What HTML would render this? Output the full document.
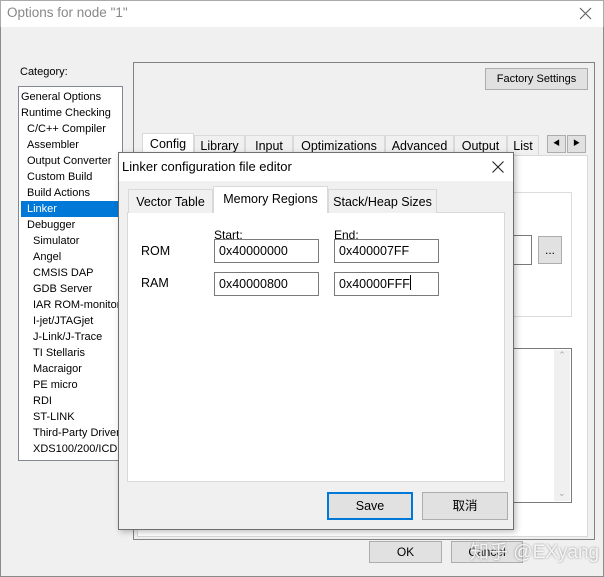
<!DOCTYPE html>
<html><head><meta charset="utf-8"><style>
*{margin:0;padding:0;box-sizing:border-box}
body{width:604px;height:577px;overflow:hidden;background:#f0f0f0;font-family:"Liberation Sans","Noto Sans CJK SC",sans-serif;font-size:12px;color:#000;position:relative}
.a{position:absolute}
.btn{position:absolute;background:#e1e1e1;border:1px solid #adadad;text-align:center}
.li{position:absolute;left:2px;width:98px;height:16px;line-height:16px;font-size:11px;white-space:nowrap;overflow:hidden}
.tab{position:absolute;height:20px;border:1px solid #d9d9d9;border-bottom:none;background:#f0f0f0;text-align:center;font-size:12.5px;line-height:20px}
.in{position:absolute;background:#fff;border:1px solid #7a7a7a;height:24px;line-height:22px;padding-left:4px;font-size:12.5px}
</style></head><body>
<div class="a" style="left:0;top:0;width:604px;height:577px;border:1px solid #8a8a8a;border-top:none"></div>
<div class="a" style="left:0;top:0;width:604px;height:27px;background:#fff;border:1px solid #aaa;border-bottom:none"></div>
<div class="a" style="left:7px;top:5px;font-size:13.5px;color:#888">Options for node "1"</div>
<svg class="a" style="left:579px;top:7px" width="13" height="13"><path d="M1 1L12 12M12 1L1 12" stroke="#666" stroke-width="1.2"/></svg>

<div class="a" style="left:20px;top:66px;font-size:11px">Category:</div>
<div class="a" style="left:18px;top:86px;width:105px;height:375px;background:#fff;border:1px solid #828790">
<div class="li" style="top:2px">General Options</div>
<div class="li" style="top:18px">Runtime Checking</div>
<div class="li" style="top:34px;padding-left:6px">C/C++ Compiler</div>
<div class="li" style="top:50px;padding-left:6px">Assembler</div>
<div class="li" style="top:66px;padding-left:6px">Output Converter</div>
<div class="li" style="top:82px;padding-left:6px">Custom Build</div>
<div class="li" style="top:98px;padding-left:6px">Build Actions</div>
<div class="li" style="top:114px;padding-left:6px;background:#0078d7;color:#fff">Linker</div>
<div class="li" style="top:130px;padding-left:6px">Debugger</div>
<div class="li" style="top:146px;padding-left:12px">Simulator</div>
<div class="li" style="top:162px;padding-left:12px">Angel</div>
<div class="li" style="top:178px;padding-left:12px">CMSIS DAP</div>
<div class="li" style="top:194px;padding-left:12px">GDB Server</div>
<div class="li" style="top:210px;padding-left:12px">IAR ROM-monitor</div>
<div class="li" style="top:226px;padding-left:12px">I-jet/JTAGjet</div>
<div class="li" style="top:242px;padding-left:12px">J-Link/J-Trace</div>
<div class="li" style="top:258px;padding-left:12px">TI Stellaris</div>
<div class="li" style="top:274px;padding-left:12px">Macraigor</div>
<div class="li" style="top:290px;padding-left:12px">PE micro</div>
<div class="li" style="top:306px;padding-left:12px">RDI</div>
<div class="li" style="top:322px;padding-left:12px">ST-LINK</div>
<div class="li" style="top:338px;padding-left:12px">Third-Party Driver</div>
<div class="li" style="top:354px;padding-left:12px">XDS100/200/ICDI</div>
</div>

<div class="a" style="left:133px;top:62px;width:462px;height:478px;border:1px solid #828282"></div>
<div class="btn" style="left:485px;top:68px;width:103px;height:22px;line-height:20px;font-size:11px">Factory Settings</div>
<div class="a" style="left:137px;top:155px;width:451px;height:382px;background:#fff;border:1px solid #d9d9d9"></div>
<div class="tab" style="left:142px;top:133px;width:52px;height:23px;background:#fff;line-height:21px">Config</div>
<div class="tab" style="left:194px;top:135px;width:51px">Library</div>
<div class="tab" style="left:245px;top:135px;width:48px">Input</div>
<div class="tab" style="left:293px;top:135px;width:92px">Optimizations</div>
<div class="tab" style="left:385px;top:135px;width:69px">Advanced</div>
<div class="tab" style="left:454px;top:135px;width:53px">Output</div>
<div class="tab" style="left:507px;top:135px;width:32px">List</div>
<div class="btn" style="left:547px;top:135px;width:19px;height:18px;font-size:7px;line-height:16px">◀</div>
<div class="btn" style="left:567px;top:135px;width:19px;height:18px;font-size:7px;line-height:16px">▶</div>
<div class="a" style="left:513px;top:192px;width:59px;height:125px;border:1px solid #dcdcdc"></div>
<div class="a" style="left:500px;top:235px;width:32px;height:30px;border:1px solid #7a7a7a;background:#fff"></div>
<div class="btn" style="left:538px;top:236px;width:24px;height:28px;line-height:26px">...</div>
<div class="a" style="left:500px;top:348px;width:72px;height:155px;border:1px solid #7a7a7a;background:#fff"></div>
<div class="a" style="left:554px;top:350px;width:16px;height:151px;background:#f0f0f0;color:#aaa;font-size:9px;text-align:center">⌃<br><span style="position:absolute;bottom:2px;left:4px">⌄</span></div>

<div class="btn" style="left:369px;top:541px;width:73px;height:22px;line-height:20px">OK</div>
<div class="btn" style="left:451px;top:541px;width:72px;height:22px;line-height:20px">Cancel</div>
<div class="a" style="left:470px;top:537px;font-size:19px;color:rgba(255,255,255,.85);text-shadow:0 0 2px #888">知乎 @EXyang</div>

<div class="a" style="left:118px;top:152px;width:396px;height:378px;background:#f0f0f0;border:1px solid #707070;box-shadow:2px 2px 6px rgba(0,0,0,.25)">
<div class="a" style="left:0;top:0;width:394px;height:28px;background:#fff"></div>
<div class="a" style="left:3px;top:6px;font-size:13px">Linker configuration file editor</div>
<svg class="a" style="left:373px;top:8px" width="12" height="12"><path d="M0.5 0.5L11.5 11.5M11.5 0.5L0.5 11.5" stroke="#222" stroke-width="1.1"/></svg>
<div class="a" style="left:8px;top:59px;width:378px;height:270px;background:#fff;border:1px solid #d9d9d9"></div>
<div class="tab" style="left:9px;top:36px;width:85px;height:24px;line-height:24px">Vector Table</div>
<div class="tab" style="left:94px;top:33px;width:115px;height:27px;background:#fff;line-height:25px">Memory Regions</div>
<div class="tab" style="left:209px;top:36px;width:109px;height:24px;line-height:24px">Stack/Heap Sizes</div>
<div class="a" style="left:22px;top:91px;font-size:12.5px">ROM</div>
<div class="a" style="left:22px;top:123px;font-size:12.5px">RAM</div>
<div class="a" style="left:95px;top:75px;font-size:12px">Start:</div>
<div class="a" style="left:215px;top:75px;font-size:12px">End:</div>
<div class="in" style="left:95px;top:86px;width:105px">0x40000000</div>
<div class="in" style="left:215px;top:86px;width:105px">0x400007FF</div>
<div class="in" style="left:95px;top:119px;width:105px">0x40000800</div>
<div class="in" style="left:215px;top:119px;width:105px">0x40000FFF<span style="display:inline-block;width:1px;height:15px;background:#000;vertical-align:-2px"></span></div>
<div class="btn" style="left:208px;top:339px;width:86px;height:28px;line-height:25px;border:2px solid #0078d7;font-size:12.5px">Save</div>
<div class="btn" style="left:303px;top:339px;width:86px;height:28px;line-height:26px;font-size:12.5px">取消</div>
</div>
</body></html>
